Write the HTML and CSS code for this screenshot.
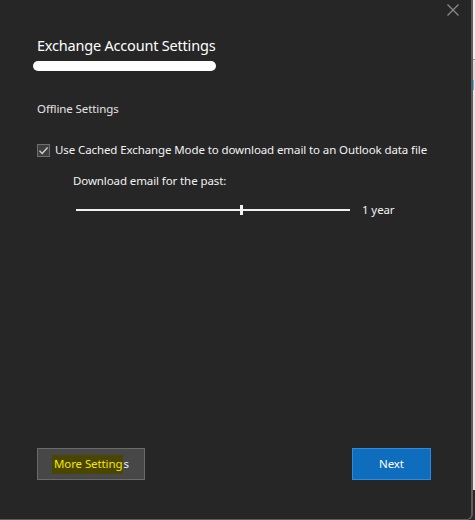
FILE: index.html
```html
<!DOCTYPE html>
<html>
<head>
<meta charset="utf-8">
<link rel="stylesheet" href="styles.css">
</head>
<body>
<div class="stage">
  <div class="window">
    <button class="close" aria-label="Close">
      <svg width="12" height="12" viewBox="0 0 12 12"><path d="M0.5 0.5 L11.5 11.5 M11.5 0.5 L0.5 11.5" stroke="#8c8c8c" stroke-width="1.2" fill="none"/></svg>
    </button>
    <div class="content">
      <h1 class="title">Exchange Account Settings</h1>
      <div class="redact"></div>
      <div class="section">Offline Settings</div>
      <label class="check-row">
        <span class="checkbox">
          <svg width="11" height="11" viewBox="0 0 11 11"><path d="M1.5 5.8 L4.2 8.4 L9.6 2.6" stroke="#d0d0d0" stroke-width="1.4" fill="none"/></svg>
        </span>
        <span class="check-label">Use Cached Exchange Mode to download email to an Outlook data file</span>
      </label>
      <div class="sub">
        <div class="sub-label">Download email for the past:</div>
        <div class="slider-row">
          <div class="slider">
            <div class="track"></div>
            <div class="thumb" style="left: 60%"></div>
          </div>
          <span class="value">1 year</span>
        </div>
      </div>
    </div>
    <div class="footer">
      <button class="btn secondary"><span class="hl">More Setting</span>s</button>
      <button class="btn primary">Next</button>
    </div>
  </div>
  <div class="behind">
    <div class="b1"></div>
    <div class="b2"></div>
    <div class="b3"></div>
  </div>
</div>
</body>
</html>
```
FILE: styles.css
```css
* { box-sizing: border-box; }
html, body { margin: 0; padding: 0; }
body {
  background: #2a2a2a;
  font-family: "Segoe UI", "Noto Sans", "Open Sans", sans-serif;
  color: #ffffff;
}
.stage {
  display: flex;
  width: 475px;
  height: 520px;
}
.window {
  position: relative;
  width: 473px;
  height: 520px;
  background: #262626;
  border-right: 2px solid #5e5e5e;
  border-bottom: 1px solid #5e5e5e;
  border-bottom-right-radius: 6px;
  display: flex;
  flex-direction: column;
}
.behind {
  flex: 1;
  display: flex;
  flex-direction: column;
  background: #e6e6e6;
  height: 490px;
}
.b1 { height: 60px; background: #f0f0f0; border-bottom: 1px solid #9a9a9a; }
.b2 { height: 20px; background: #dcdcdc; }
.b3 { height: 10px; background: #5bb8e0; width: 1px; }
.close {
  position: absolute;
  top: 4px;
  right: 12px;
  padding: 0;
  border: 0;
  background: transparent;
  width: 12px;
  height: 12px;
  display: block;
}
.close svg { display: block; }
.content {
  flex: 1;
  padding: 35px 0 0 37px;
  display: flex;
  flex-direction: column;
}
.title {
  margin: 0;
  font-size: 14.5px;
  letter-spacing: -0.2px;
  font-weight: 400;
  line-height: 20px;
  color: #ffffff;
}
.redact {
  margin: 6px 0 0 -4px;
  width: 183px;
  height: 10px;
  border-radius: 5px;
  background: #ffffff;
}
.section {
  margin-top: 30px;
  font-size: 11.5px;
  letter-spacing: -0.1px;
  line-height: 16px;
  color: #e4e4e4;
}
.check-row {
  margin-top: 25px;
  display: flex;
  align-items: center;
  gap: 5px;
  font-size: 11.5px;
  letter-spacing: -0.1px;
  line-height: 16px;
}
.checkbox {
  width: 13px;
  height: 13px;
  border: 1px solid #6e6e6e;
  background: #3e3e3e;
  display: flex;
  align-items: center;
  justify-content: center;
}
.checkbox svg { display: block; }
.check-label { color: #f2f2f2; }
.sub {
  margin-left: 36px;
  margin-top: 15px;
  display: flex;
  flex-direction: column;
}
.sub-label {
  font-size: 11.5px;
  letter-spacing: -0.1px;
  line-height: 16px;
  color: #f2f2f2;
}
.slider-row {
  margin-top: 13px;
  display: flex;
  align-items: center;
  gap: 12px;
  margin-left: 3px;
}
.slider {
  position: relative;
  width: 274px;
  height: 12px;
  display: flex;
  align-items: center;
}
.track {
  width: 100%;
  height: 2px;
  background: #f0f0f0;
}
.thumb {
  position: absolute;
  top: 1px;
  width: 3px;
  height: 10px;
  background: #f0f0f0;
}
.value {
  font-size: 11.5px;
  letter-spacing: -0.1px;
  line-height: 16px;
  color: #f2f2f2;
}
.footer {
  display: flex;
  justify-content: space-between;
  padding: 0 40px 39px 37px;
}
.btn {
  height: 32px;
  font-family: inherit;
  font-size: 11.5px;
  letter-spacing: -0.1px;
  line-height: 16px;
  padding: 0;
  display: flex;
  align-items: center;
  justify-content: center;
}
.secondary {
  width: 108px;
  background: #474747;
  border: 1px solid #6a6a6a;
  color: #f2f2f2;
  justify-content: flex-start;
  padding-left: 14px;
}
.hl {
  background: #4a4600;
  color: #f5e600;
  padding: 1px 1px 2px 2px;
  margin-left: 0;
}
.primary {
  width: 79px;
  background: #0f6dbd;
  border: 1px solid #2e8ae0;
  color: #ffffff;
}
```
